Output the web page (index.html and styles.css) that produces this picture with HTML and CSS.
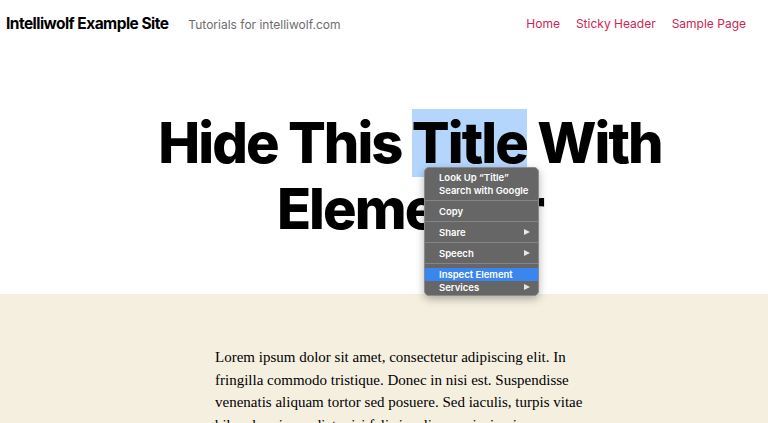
FILE: index.html
```html
<!DOCTYPE html>
<html lang="en">
<head>
    <meta charset="UTF-8">
    <meta name="viewport" content="width=device-width, initial-scale=1.0">
    <title>Hide This Title With Elementor</title>
    <link rel="stylesheet" href="styles.css">
</head>
<body>
    <header class="site-header">
        <div class="branding">
            <div class="site-title">Intelliwolf Example Site</div>
            <div class="site-description">Tutorials for intelliwolf.com</div>
        </div>
        <nav class="primary-menu">
            <a href="#">Home</a>
            <a href="#">Sticky Header</a>
            <a href="#">Sample Page</a>
        </nav>
    </header>

    <section class="entry-header">
        <h1 class="entry-title">Hide This <span class="selected">Title</span> With Elementor</h1>

        <!-- Context menu -->
        <div class="context-menu">
            <div class="menu-group">
                <div class="menu-item">Look Up “Title”</div>
                <div class="menu-item">Search with Google</div>
            </div>
            <div class="menu-group">
                <div class="menu-item">Copy</div>
            </div>
            <div class="menu-group">
                <div class="menu-item has-sub">Share</div>
            </div>
            <div class="menu-group">
                <div class="menu-item has-sub">Speech</div>
            </div>
            <div class="menu-group last">
                <div class="menu-item active">Inspect Element</div>
                <div class="menu-item has-sub">Services</div>
            </div>
        </div>
    </section>

    <section class="entry-content">
        <p>Lorem ipsum dolor sit amet, consectetur adipiscing elit. In fringilla commodo tristique. Donec in nisi est. Suspendisse venenatis aliquam tortor sed posuere. Sed iaculis, turpis vitae bibendum imperdiet, nisi felis iaculis mauris, in viverra dolor</p>
    </section>
</body>
</html>
```

FILE: styles.css
```css
/* Base styles */
body {
    margin: 0;
    font-family: Inter, "Noto Sans", sans-serif;
    color: #000;
    background: #fff;
    overflow: hidden;
}

/* Header */
.site-header {
    display: flex;
    justify-content: space-between;
    align-items: center;
    height: 46px;
    padding: 0 22px 0 6px;
}

.branding {
    display: flex;
    align-items: baseline;
    gap: 20px;
}

.site-title {
    font-size: 15.5px;
    font-weight: 700;
    letter-spacing: -0.035em;
}

.site-description {
    font-size: 12px;
    color: #6d6d6d;
}

.primary-menu {
    display: flex;
    gap: 16px;
}

.primary-menu a {
    color: #cd2653;
    font-size: 12px;
    text-decoration: none;
}

/* Title area */
.entry-header {
    position: relative;
    height: 247px;
    padding-top: 1px;
    text-align: center;
}

.entry-title {
    margin: 63px 0 0 130px;
    width: 560px;
    font-size: 56px;
    font-weight: 800;
    line-height: 66px;
    letter-spacing: -0.035em;
}

.selected {
    background: #b4d6fd;
}

/* Context menu */
.context-menu {
    position: absolute;
    left: 424px;
    top: 121px;
    width: 113px;
    padding: 3px 0 1px;
    background: #666;
    border: 1px solid #8a8a8a;
    border-radius: 5px;
    box-shadow: 0 3px 8px rgba(0, 0, 0, 0.3);
    text-align: left;
}

.menu-group {
    padding: 0 0 3px;
    margin-bottom: 3px;
    border-bottom: 1px solid #858585;
}

.menu-group.last {
    border-bottom: none;
    margin-bottom: 0;
    padding-bottom: 0;
}

.menu-item {
    position: relative;
    padding: 0 4px 0 14px;
    height: 13px;
    line-height: 13px;
    font-size: 9.5px;
    font-weight: 600;
    color: #fff;
    white-space: nowrap;
}

.menu-group + .menu-group .menu-item:first-child {
    margin-top: 4px;
}

.menu-item.has-sub::after {
    content: "";
    position: absolute;
    right: 8px;
    top: 3px;
    border-left: 6px solid #e6e6e6;
    border-top: 3.5px solid transparent;
    border-bottom: 3.5px solid transparent;
}

.menu-item.active {
    background: #3a86ee;
}

/* Content */
.entry-content {
    background: #f5efe0;
    height: 200px;
    padding-top: 52px;
}

.entry-content p {
    margin: 0 0 0 215px;
    width: 368px;
    font-family: "Liberation Serif", serif;
    font-size: 15px;
    line-height: 22.5px;
    color: #000;
}
```
